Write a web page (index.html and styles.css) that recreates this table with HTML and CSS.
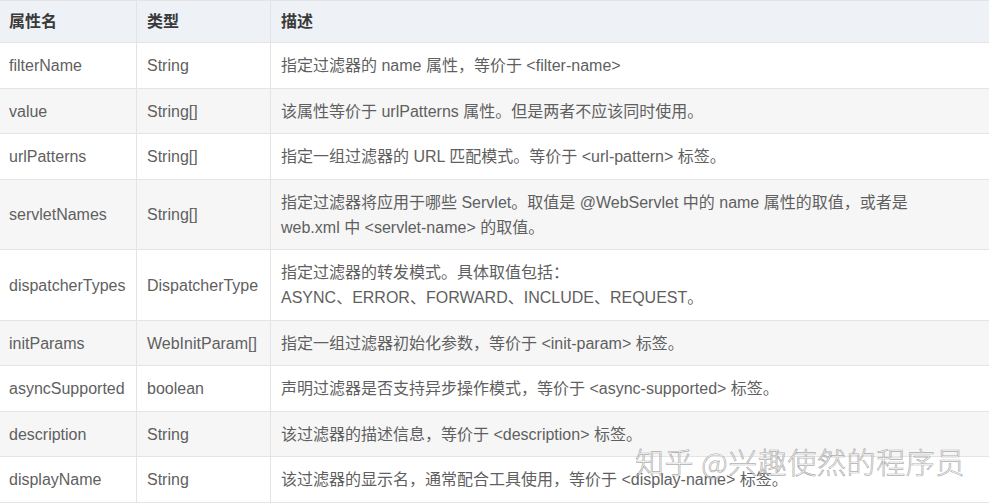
FILE: index.html
```html
<!DOCTYPE html>
<html lang="zh-CN">
<head>
    <meta charset="UTF-8">
    <meta name="viewport" content="width=device-width, initial-scale=1.0">
    <title>@WebFilter 属性</title>
    <link rel="stylesheet" href="styles.css">
</head>
<body>

<div class="wrap">
    <table class="props">
        <colgroup>
            <col class="c-name">
            <col class="c-type">
            <col>
        </colgroup>
        <thead>
            <tr>
                <th>属性名</th>
                <th>类型</th>
                <th>描述</th>
            </tr>
        </thead>
        <tbody>
            <tr>
                <td>filterName</td>
                <td>String</td>
                <td>指定过滤器的 name 属性，等价于 &lt;filter-name&gt;</td>
            </tr>
            <tr>
                <td>value</td>
                <td>String[]</td>
                <td>该属性等价于 urlPatterns 属性。但是两者不应该同时使用。</td>
            </tr>
            <tr>
                <td>urlPatterns</td>
                <td>String[]</td>
                <td>指定一组过滤器的 URL 匹配模式。等价于 &lt;url-pattern&gt; 标签。</td>
            </tr>
            <tr>
                <td>servletNames</td>
                <td>String[]</td>
                <td>指定过滤器将应用于哪些 Servlet。取值是 @WebServlet 中的 name 属性的取值，或者是<br>web.xml 中 &lt;servlet-name&gt; 的取值。</td>
            </tr>
            <tr>
                <td>dispatcherTypes</td>
                <td>DispatcherType</td>
                <td>指定过滤器的转发模式。具体取值包括：<br>ASYNC、ERROR、FORWARD、INCLUDE、REQUEST。</td>
            </tr>
            <tr>
                <td>initParams</td>
                <td>WebInitParam[]</td>
                <td>指定一组过滤器初始化参数，等价于 &lt;init-param&gt; 标签。</td>
            </tr>
            <tr>
                <td>asyncSupported</td>
                <td>boolean</td>
                <td>声明过滤器是否支持异步操作模式，等价于 &lt;async-supported&gt; 标签。</td>
            </tr>
            <tr>
                <td>description</td>
                <td>String</td>
                <td>该过滤器的描述信息，等价于 &lt;description&gt; 标签。</td>
            </tr>
            <tr>
                <td>displayName</td>
                <td>String</td>
                <td>该过滤器的显示名，通常配合工具使用，等价于 &lt;display-name&gt; 标签。</td>
            </tr>
        </tbody>
    </table>

    <div class="watermark">知乎 @兴趣使然的程序员</div>
</div>

</body>
</html>
```

FILE: styles.css
```css
body {
    margin: 0;
    overflow: hidden;
    background: #fff;
    font-family: "Liberation Sans", "Noto Sans CJK SC", sans-serif;
    font-size: 16px;
    color: #5f5f5f;
}
.wrap {
    position: relative;
    width: 989px;
    height: 503px;
    overflow: hidden;
}
.props {
    width: 1000px;
    margin-left: -2px;
    border-collapse: collapse;
    table-layout: fixed;
}
.c-name {
    width: 138px;
}
.c-type {
    width: 134px;
}
.props th,
.props td {
    border: 1px solid #e3e4e6;
    text-align: left;
    vertical-align: middle;
    white-space: nowrap;
}
.props th {
    padding: 8px 10px;
    line-height: 25px;
    background: #eef1f5;
    color: #3a3a3a;
    font-weight: bold;
}
.props td {
    padding: 10px 10px 9.5px;
    line-height: 25px;
}
.props tbody tr:nth-child(even) td {
    background: #f6f6f6;
}
.props tbody tr:nth-child(odd) td {
    background: #fff;
}
/* водяной знак поверх таблицы */
.watermark {
    position: absolute;
    left: 635px;
    top: 440px;
    font-family: "Noto Sans CJK SC", sans-serif;
    font-size: 29px;
    font-weight: 300;
    letter-spacing: 0.6px;
    color: rgba(255, 255, 255, 0.6);
    -webkit-text-stroke: 0.7px rgba(130, 130, 130, 0.65);
    white-space: nowrap;
}
```
